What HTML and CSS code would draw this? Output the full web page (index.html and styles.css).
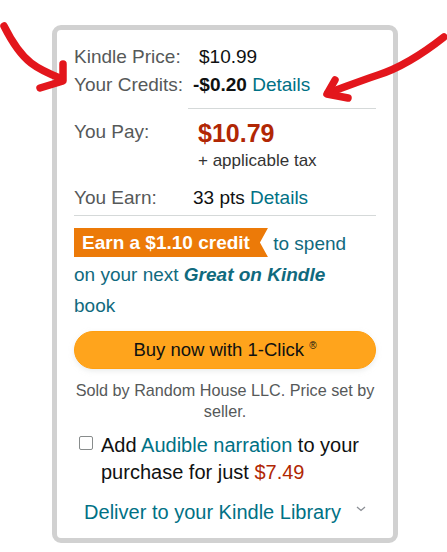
FILE: index.html
```html
<!DOCTYPE html>
<html lang="en">
<head>
<meta charset="utf-8">
<title>Kindle buy box</title>
<link rel="stylesheet" href="styles.css">
</head>
<body>
<div class="box">
  <div class="prow r1"><span class="lbl">Kindle Price:</span><span class="val v-kp">$10.99</span></div>
  <div class="prow r2"><span class="lbl">Your Credits:</span><span class="val"><b class="credit">-$0.20</b> <a class="link">Details</a></span></div>
  <div class="sep sep-short"></div>
  <div class="prow r3"><span class="lbl">You Pay:</span>
    <span class="val v-pay"><span class="price">$10.79</span><span class="tax">+ applicable tax</span></span></div>
  <div class="prow r4"><span class="lbl">You Earn:</span><span class="val">33 pts <a class="link">Details</a></span></div>
  <div class="sep"></div>
  <p class="promo"><span class="badge">Earn a $1.10 credit</span> to spend on your next <b><i>Great on Kindle</i></b> book</p>
  <button class="buy">Buy now with 1-Click <sup>®</sup></button>
  <p class="sold">Sold by Random House LLC. Price set by seller.</p>
  <div class="audible"><span class="check"></span><span class="atext">Add <a class="link">Audible narration</a> to your purchase for just <span class="red">$7.49</span></span></div>
  <div class="deliver"><a class="link">Deliver to your Kindle Library</a><svg class="chev" width="10" height="6" viewBox="0 0 10 6"><path d="M1 1 L5 4.5 L9 1" fill="none" stroke="#8d9096" stroke-width="1.3"/></svg></div>
</div>
<svg class="arrows" width="447" height="552" viewBox="0 0 447 552">
  <g fill="none" stroke="#e3161c" stroke-width="7.5" stroke-linecap="round" stroke-linejoin="round">
    <path d="M4 26 C12 42 22 56 31 63 C40 70 52 75 62 79"/>
    <path d="M63 64 L63 81 L40 88"/>
    <path d="M444 37 C425 52 400 68 378 75 C360 81 345 87 328 93"/>
    <path d="M335 80 L327 94 L348 98"/>
  </g>
</svg>
</body>
</html>
```
FILE: styles.css
```css
html, body { margin: 0; padding: 0; background: #fff; }
body {
  width: 447px; height: 552px; position: relative; overflow: hidden;
  font-family: "Liberation Sans", Arial, sans-serif; color: #0f1111;
}
.box {
  position: relative;
  margin: 25px 0 0 52px;
  width: 346px; height: 518px; box-sizing: border-box;
  border: 5px solid #d1d1d1; border-radius: 9px;
  padding: 13px 17px 0 17px;
}
.link { color: #007185; text-decoration: none; }
.prow { display: flex; font-size: 19px; line-height: 28px; }
.lbl { width: 119px; flex: none; color: #565959; }
.val { color: #0f1111; }
.v-kp { margin-left: 6px; }
.credit { font-weight: 700; }
.sep { height: 1px; background: #d5d9d9; }
.sep-short { margin: 9px 0 0 114px; }
.r3 { margin-top: 9px; }
.v-pay { display: flex; flex-direction: column; margin-left: 5px; }
.price { font-size: 25px; line-height: 30px; font-weight: 700; color: #b12704; }
.tax { font-size: 17px; line-height: 26px; color: #333; }
.r4 { margin-top: 10px; }
.r4 + .sep { margin-top: 3px; }
.promo {
  margin: 12px 0 0; width: 288px; font-size: 19px; line-height: 31px; color: #106a7e;
}
.badge {
  display: inline-block; background: #ec7a08; color: #fff; font-weight: 700;
  height: 29px; line-height: 29px; padding: 0 18px 0 8px; vertical-align: top;
  clip-path: polygon(0 0, 100% 0, calc(100% - 8px) 50%, 100% 100%, 0 100%);
}
.buy {
  display: block; width: 100%; height: 38px; margin-top: 10px;
  background: #ffa41c; border: 1px solid #ff9f10; border-radius: 19px;
  font-family: inherit; font-size: 18.5px; color: #0f1111; padding: 0;
  box-shadow: 0 2px 5px rgba(213,217,217,.5);
}
.buy sup { font-size: 10px; vertical-align: 7px; }
.sold {
  margin: 11px -6px 0; text-align: center; font-size: 16.2px; line-height: 21px; color: #565959;
}
.audible { display: flex; margin-top: 10px; font-size: 20px; line-height: 27px; }
.check {
  flex: none; width: 14px; height: 14px; box-sizing: border-box;
  border: 1px solid #888c8c; border-radius: 2px; margin: 4px 8px 0 5px;
  background: #fff;
}
.red { color: #b12704; }
.deliver {
  margin-top: 12px; display: flex; justify-content: center; align-items: center;
  font-size: 20px; line-height: 28px; gap: 15px;
}
.chev { margin-top: -6px; }
.arrows { position: absolute; left: 0; top: 0; pointer-events: none; }
```
